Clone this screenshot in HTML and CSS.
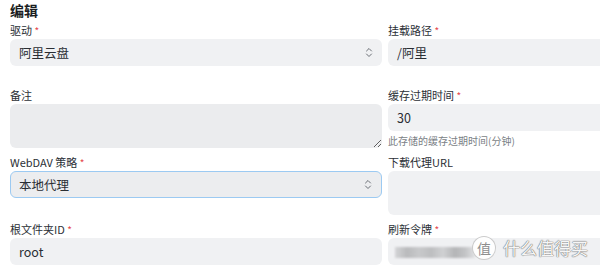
FILE: index.html
```html
<!DOCTYPE html>
<html lang="zh">
<head>
<meta charset="utf-8">
<link rel="stylesheet" href="styles.css">
</head>
<body>
<div class="page">
  <h1 class="title">编辑</h1>
  <div class="form">
    <div class="item first">
      <label class="label">驱动 <span class="req">*</span></label>
      <div class="select">
        <span>阿里云盘</span>
        <svg class="chev" width="8" height="11" viewBox="0 0 8 11"><path d="M1.5 4 L4 1.5 L6.5 4 M1.5 7 L4 9.5 L6.5 7" fill="none" stroke="#6b6f76" stroke-width="1" stroke-linecap="round" stroke-linejoin="round"/></svg>
      </div>
    </div>
    <div class="item first">
      <label class="label">挂载路径 <span class="req">*</span></label>
      <div class="input">/阿里</div>
    </div>

    <div class="item">
      <label class="label">备注</label>
      <textarea class="area area-note"></textarea>
    </div>
    <div class="item">
      <label class="label">缓存过期时间 <span class="req">*</span></label>
      <div class="input">30</div>
      <div class="help">此存储的缓存过期时间(分钟)</div>
    </div>

    <div class="item">
      <label class="label">WebDAV 策略 <span class="req">*</span></label>
      <div class="select focus">
        <span>本地代理</span>
        <svg class="chev" width="8" height="11" viewBox="0 0 8 11"><path d="M1.5 4 L4 1.5 L6.5 4 M1.5 7 L4 9.5 L6.5 7" fill="none" stroke="#6b6f76" stroke-width="1" stroke-linecap="round" stroke-linejoin="round"/></svg>
      </div>
    </div>
    <div class="item">
      <label class="label">下载代理URL</label>
      <div class="box-tall"></div>
    </div>

    <div class="item">
      <label class="label">根文件夹ID <span class="req">*</span></label>
      <div class="input">root</div>
    </div>
    <div class="item">
      <label class="label">刷新令牌 <span class="req">*</span></label>
      <div class="input token"><span class="blur"></span></div>
    </div>
  </div>
  <div class="watermark"><span class="wm-circle">值</span><span class="wm-text">什么值得买</span></div>
</div>
</body>
</html>
```
FILE: styles.css
```css
html, body {
  margin: 0;
  padding: 0;
  background: #ffffff;
  overflow: hidden;
}
body {
  font-family: "Noto Sans CJK SC", "Noto Sans", "Liberation Sans", sans-serif;
  color: #1f2329;
}
.page {
  position: relative;
  width: 600px;
  height: 267px;
  padding: 1px 0 0 10px;
  box-sizing: border-box;
  overflow: hidden;
}
.title {
  margin: 0;
  font-size: 14px;
  line-height: 18px;
  font-weight: 700;
  color: #1a1d21;
}
.form {
  margin-top: 3px;
  display: grid;
  grid-template-columns: 372px 372px;
  column-gap: 6px;
  row-gap: 6px;
}
.item {
  display: flex;
  flex-direction: column;
}
.item.first {
  min-height: 59px;
}
.label {
  font-size: 11px;
  line-height: 16px;
  height: 16px;
  margin-bottom: 1px;
  color: #2b2f36;
  font-weight: 400;
}
.req {
  color: #e5484d;
  font-size: 10px;
}
.input, .select {
  height: 27px;
  box-sizing: border-box;
  background: #f0f1f3;
  border-radius: 6px;
  padding: 0 9px;
  display: flex;
  align-items: center;
  font-size: 12.5px;
  color: #2a2e33;
}
.select {
  justify-content: space-between;
  padding-right: 9px;
}
.select.focus {
  background: #ecedef;
  border: 1.5px solid #9ccaf2;
  padding-left: 8px;
  height: 27px;
}
.chev {
  display: block;
}
.area {
  display: block;
  height: 44px;
  box-sizing: border-box;
  background: #ebecee;
  border: none;
  border-radius: 6px;
  margin: 0;
  padding: 6px 9px;
  font-family: inherit;
  resize: both;
  outline: none;
}
.help {
  font-size: 10px;
  line-height: 14px;
  margin-top: 3px;
  color: #7b7f86;
}
.box-tall {
  height: 44px;
  background: #f0f1f3;
  border-radius: 6px;
}
.blur {
  display: block;
  width: 80px;
  height: 11px;
  margin-left: -2px;
  margin-top: 2px;
  background: linear-gradient(90deg, #d4d5d7 0px, #b9babc 12px, #c8c9cb 24px, #bdbec0 36px, #d0d1d3 48px, #b4b5b7 60px, #c3c4c6 70px, #e0e1e3 80px);
  filter: blur(1.2px);
}
.watermark {
  position: absolute;
  left: 472px;
  top: 236px;
  display: flex;
  align-items: center;
  gap: 7px;
  white-space: nowrap;
  pointer-events: none;
}
.wm-circle {
  flex: none;
  width: 22px;
  height: 22px;
  border-radius: 50%;
  background: rgba(255,255,255,0.92);
  border: 1px solid rgba(140,140,140,0.45);
  color: #8e8e8e;
  font-size: 14px;
  line-height: 22px;
  text-align: center;
}
.wm-text {
  flex: none;
  font-size: 17px;
  line-height: 22px;
  color: rgba(255,255,255,0.95);
  text-shadow: 0 0 1px #7d7d7d, 0 0 1px #7d7d7d, 0 0 1px #7d7d7d;
}
```
